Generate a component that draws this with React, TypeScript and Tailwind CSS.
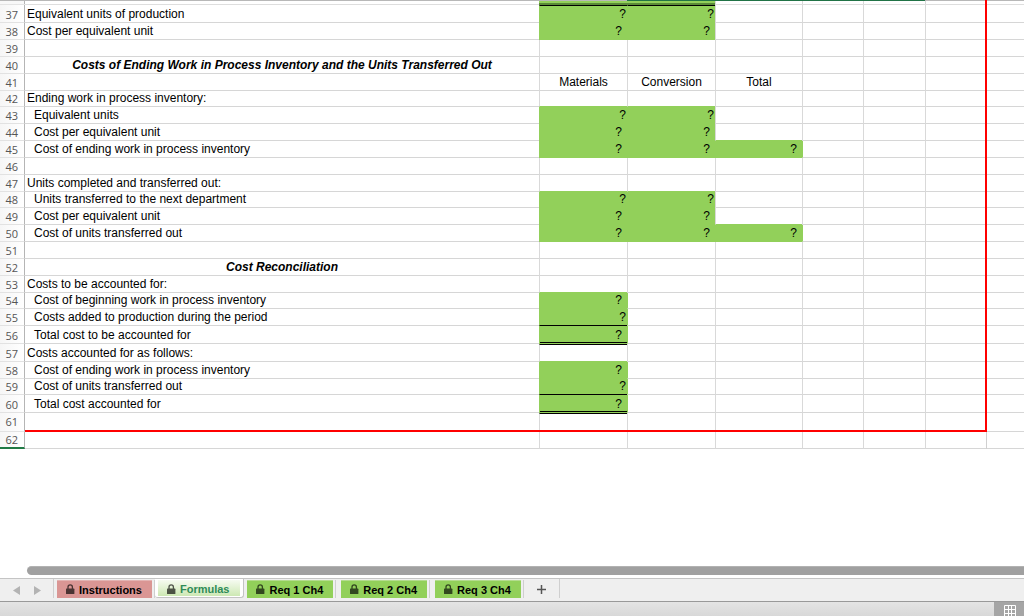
import React from "react";

type Row = {
  n: number;
  h: string;
  label?: string;
  kind?: "indent" | "title";
  cells?: string[];
  // One letter per column B, C, D: "n" = value flush right, "a" = accounting value, "." = empty.
  answers?: string;
  line?: "single" | "double";
};

const H16 = "h-[16px]";
const H17 = "h-[17px]";
const H18 = "h-[18px]";
const H19 = "h-[19px]";

const rows: Row[] = [
  { n: 37, h: H18, label: "Equivalent units of production", answers: "nn." },
  { n: 38, h: H17, label: "Cost per equivalent unit", answers: "aa." },
  { n: 39, h: H17 },
  { n: 40, h: H17, label: "Costs of Ending Work in Process Inventory and the Units Transferred Out", kind: "title" },
  { n: 41, h: H17, cells: ["Materials", "Conversion", "Total"] },
  { n: 42, h: H16, label: "Ending work in process inventory:" },
  { n: 43, h: H17, label: "Equivalent units", kind: "indent", answers: "nn." },
  { n: 44, h: H17, label: "Cost per equivalent unit", kind: "indent", answers: "aa." },
  { n: 45, h: H17, label: "Cost of ending work in process inventory", kind: "indent", answers: "aaa" },
  { n: 46, h: H17 },
  { n: 47, h: H17, label: "Units completed and transferred out:" },
  { n: 48, h: H16, label: "Units transferred to the next department", kind: "indent", answers: "nn." },
  { n: 49, h: H17, label: "Cost per equivalent unit", kind: "indent", answers: "aa." },
  { n: 50, h: H17, label: "Cost of units transferred out", kind: "indent", answers: "aaa" },
  { n: 51, h: H17 },
  { n: 52, h: H17, label: "Cost Reconciliation", kind: "title" },
  { n: 53, h: H17, label: "Costs to be accounted for:" },
  { n: 54, h: H16, label: "Cost of beginning work in process inventory", kind: "indent", answers: "a.." },
  { n: 55, h: H17, label: "Costs added to production during the period", kind: "indent", answers: "n..", line: "single" },
  { n: 56, h: H18, label: "Total cost to be accounted for", kind: "indent", answers: "a..", line: "double" },
  { n: 57, h: H18, label: "Costs accounted for as follows:" },
  { n: 58, h: H17, label: "Cost of ending work in process inventory", kind: "indent", answers: "a.." },
  { n: 59, h: H16, label: "Cost of units transferred out", kind: "indent", answers: "n..", line: "single" },
  { n: 60, h: H18, label: "Total cost accounted for", kind: "indent", answers: "a..", line: "double" },
  { n: 61, h: H19 },
  { n: 62, h: H17 },
];

// The red frame under row 61 is cast upwards by the cells of row 62.
const frameBelow = "shadow-[0_-2px_0_#ff0000]";

const isAnswer = (r: number, c: number) => {
  const mark = rows[r]?.answers?.[c];
  return mark === "n" || mark === "a";
};

function ValueCell({ r, c }: { r: number; c: number }) {
  const row = rows[r];
  const filled = isAnswer(r, c);
  const first = c === 0;
  const bottom =
    first && row.line === "single"
      ? "border-b-black"
      : filled || isAnswer(r + 1, c)
        ? "border-b-[#92d05a]"
        : "border-b-[#d6d6d6]";
  const left = filled || (c !== 2 && isAnswer(r, c - 1)) ? "border-l-[#92d05a]" : "border-l-[#d9d9d9]";
  const top = (first && rows[r - 1]?.line === "double") || (r === 0 && filled) ? "border-t border-t-black" : "";
  const shadow = row.n === 62 ? frameBelow : first && row.line === "double" ? "shadow-[inset_0_-1px_0_#000]" : "";
  const fill = filled ? "bg-[#92d05a] text-right" : "text-center";
  const pad = row.answers?.[c] === "a" ? "pr-[5px]" : filled ? "pr-px" : "";
  return (
    <td className={`border-b border-l p-0 pb-px align-bottom ${bottom} ${left} ${top} ${shadow} ${fill} ${pad}`}>
      {filled ? "?" : row.cells?.[c]}
    </td>
  );
}

function Sheet() {
  return (
    <table className="w-full table-fixed border-separate border-spacing-0 text-[12px] leading-[13px] text-black">
      <colgroup>
        <col className="w-[25px]" />
        <col className="w-[514px]" />
        <col className="w-[88px]" />
        <col className="w-[88px]" />
        <col className="w-[87px]" />
        <col className="w-[61px]" />
        <col className="w-[62px]" />
        <col className="w-[62px]" />
        <col />
      </colgroup>
      <tbody>
        <tr className="h-[5px] leading-[0]">
          <td className="border-t border-b border-t-[#b8b8b8] border-b-[#e4e4e4] bg-[#f8f8f8] p-0 shadow-[inset_-1px_0_0_#b5b5b5]" />
          <td className="border-t border-b border-t-[#b8b8b8] border-b-[#dedede] p-0" />
          <td className="border-t border-b-2 border-t-[#b8b8b8] border-b-[#5a8a38] bg-[#92d05a] p-0" />
          <td className="border-t border-b-2 border-t-[#217346] border-b-[#5a8a38] bg-[#92d05a] p-0" />
          <td className="border-t border-b border-t-[#217346] border-b-[#dedede] p-0 shadow-[inset_1px_0_0_#d9d9d9]" />
          <td className="border-t border-b border-t-[#217346] border-b-[#dedede] p-0 shadow-[inset_1px_0_0_#d9d9d9]" />
          <td className="border-t border-b border-t-[#217346] border-b-[#dedede] p-0 shadow-[inset_1px_0_0_#d9d9d9]" />
          <td className="border-t border-b border-t-[#b8b8b8] border-b-[#dedede] p-0 shadow-[inset_1px_0_0_#d9d9d9]" />
          <td className="border-t border-b border-t-[#b8b8b8] border-b-[#dedede] p-0 shadow-[-2px_0_0_#ff0000]" />
        </tr>
        {rows.map((row, r) => {
          const last = row.n === 62;
          const label =
            row.kind === "title"
              ? "text-center font-bold italic"
              : row.kind === "indent"
                ? "pl-[9px]"
                : "pl-[2px]";
          const head = last ? "border-b-2 border-b-[#1f7a45]" : "border-b border-b-[#e2e2e2]";
          return (
            <tr key={row.n} className={row.h}>
              <th
                scope="row"
                className={`border-r border-r-[#b5b5b5] bg-linear-to-r from-[#f6f6f6] to-white p-0 pr-[6px] pb-px text-right font-['Open_Sans',sans-serif] text-[11px] font-normal text-[#555] ${row.n === 61 ? "align-middle" : "align-bottom"} ${head}`}
              >
                {row.n}
              </th>
              <td
                className={`border-b border-b-[#d6d6d6] p-0 pb-px align-bottom whitespace-nowrap ${label} ${last ? frameBelow : ""}`}
              >
                {row.label}
              </td>
              <ValueCell r={r} c={0} />
              <ValueCell r={r} c={1} />
              <ValueCell r={r} c={2} />
              <ValueCell r={r} c={3} />
              <ValueCell r={r} c={4} />
              <td
                className={`border-b border-l border-b-[#d6d6d6] border-l-[#d9d9d9] p-0 ${last ? frameBelow : ""}`}
              />
              <td
                className={`border-b border-b-[#d6d6d6] p-0 ${last ? "shadow-[-1px_0_0_#d0d0d0]" : "shadow-[-2px_0_0_#ff0000]"}`}
              />
            </tr>
          );
        })}
      </tbody>
    </table>
  );
}

function Lock() {
  return (
    <svg viewBox="0 0 9 12" className="h-[12px] w-[9px] shrink-0 opacity-65" aria-hidden="true">
      <path d="M2 5.5V3a2.2 2.2 0 0 1 4.4 0V5.5" fill="none" stroke="#000" strokeWidth="1.3" />
      <rect x="0" y="4.6" width="8.4" height="5.4" rx="0.6" fill="#000" />
    </svg>
  );
}

function SheetTab({ name, tone }: { name: string; tone: string }) {
  return (
    <div className="flex border-r border-[#cfcfcf] pr-[2px] pl-[3px]">
      <button
        type="button"
        className={`flex h-[18px] items-center gap-[4px] border-t pr-[10px] pl-[9px] text-[11px] leading-[18px] font-bold whitespace-nowrap text-black ${tone}`}
      >
        <Lock />
        {name}
      </button>
    </div>
  );
}

export default function App() {
  return (
    <div className="flex min-h-screen flex-col overflow-hidden bg-white font-['Liberation_Sans',Arial,sans-serif]">
      <main className="flex-1">
        <Sheet />
      </main>
      <div className="pb-[3px] pl-[27px]">
        <div className="h-[9px] rounded-l-full border-t border-[#b2b2b2] bg-[#a0a0a0]" />
      </div>
      <nav aria-label="Sheets" className="flex h-[24px] border-t border-b border-t-[#c4c4c4] border-b-[#999] bg-[#efefef]">
        <div className="flex h-[19px] w-[54px] items-center justify-end gap-[14px] border-r border-[#cfcfcf] pt-[3px] pr-[12px]">
          <button type="button" aria-label="Previous sheet" className="flex">
            <svg viewBox="0 0 7 9" className="h-[9px] w-[7px]" fill="#b3b3b3"><path d="M7 0v9L0 4.5z" /></svg>
          </button>
          <button type="button" aria-label="Next sheet" className="flex">
            <svg viewBox="0 0 7 9" className="h-[9px] w-[7px]" fill="#b3b3b3"><path d="M0 0v9l7-4.5z" /></svg>
          </button>
        </div>
        <div className="flex h-[19px] pt-px">
          <SheetTab name="Instructions" tone="border-[#e3b4b3] bg-[#da9694]" />
        </div>
        <div className="flex h-[19px] rounded-b-[3px] border-r border-b border-[#c4c4c4] bg-white px-[3px]">
          <button
            type="button"
            aria-current="page"
            className="mt-px flex h-[16px] items-center gap-[4px] bg-linear-to-b from-[#f6fbf1] to-[#cde8b3] pt-[3px] pr-[11px] pl-[9px] text-[11px] font-bold whitespace-nowrap text-[#2e8b57]"
          >
            <Lock />
            Formulas
          </button>
        </div>
        <div className="flex h-[19px] gap-[2px] pt-px">
          <SheetTab name="Req 1 Ch4" tone="border-[#b4dc8e] bg-[#92d05a]" />
          <SheetTab name="Req 2 Ch4" tone="border-[#b4dc8e] bg-[#92d05a]" />
          <SheetTab name="Req 3 Ch4" tone="border-[#b4dc8e] bg-[#92d05a]" />
        </div>
        <button
          type="button"
          aria-label="Add sheet"
          className="flex h-[19px] w-[36px] items-center justify-center border-r border-[#cfcfcf] pt-[2px]"
        >
          <svg viewBox="0 0 9 9" className="h-[9px] w-[9px]" stroke="#555" strokeWidth="1.5"><path d="M4.5 0v9M0 4.5h9" /></svg>
        </button>
      </nav>
      <footer className="flex h-[14px] justify-end bg-linear-to-b from-[#e4e4e4] to-[#d8d8d8]">
        <button type="button" aria-label="Normal view" className="flex w-[30px] justify-center bg-[#a5a5a5] pt-[3px] pl-[2px]">
          <svg viewBox="0 0 12 12" className="h-[12px] w-[12px]" fill="none" stroke="#fff">
            <path d="M.5 12V.5h11V12M4.5 0v12M7.5 0v12M0 4.5h12M0 8.5h12" />
          </svg>
        </button>
      </footer>
    </div>
  );
}
